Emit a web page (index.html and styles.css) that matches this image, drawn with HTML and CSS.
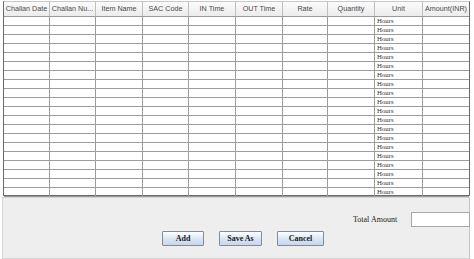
FILE: index.html
```html
<!DOCTYPE html>
<html>
<head>
<meta charset="utf-8">
<link rel="stylesheet" href="styles.css">
</head>
<body>
<div class="app">
  <div class="pane">
    <div class="grid head">
      <div class="hc">Challan Date</div>
      <div class="hc">Challan Nu...</div>
      <div class="hc">Item Name</div>
      <div class="hc">SAC Code</div>
      <div class="hc">IN Time</div>
      <div class="hc">OUT Time</div>
      <div class="hc">Rate</div>
      <div class="hc">Quantity</div>
      <div class="hc">Unit</div>
      <div class="hc">Amount(INR)</div>
    </div>
    <div class="rows">
      <div class="grid row"><div class="dc"></div><div class="dc"></div><div class="dc"></div><div class="dc"></div><div class="dc"></div><div class="dc"></div><div class="dc"></div><div class="dc"></div><div class="dc">Hours</div><div class="dc"></div></div>
      <div class="grid row"><div class="dc"></div><div class="dc"></div><div class="dc"></div><div class="dc"></div><div class="dc"></div><div class="dc"></div><div class="dc"></div><div class="dc"></div><div class="dc">Hours</div><div class="dc"></div></div>
      <div class="grid row"><div class="dc"></div><div class="dc"></div><div class="dc"></div><div class="dc"></div><div class="dc"></div><div class="dc"></div><div class="dc"></div><div class="dc"></div><div class="dc">Hours</div><div class="dc"></div></div>
      <div class="grid row"><div class="dc"></div><div class="dc"></div><div class="dc"></div><div class="dc"></div><div class="dc"></div><div class="dc"></div><div class="dc"></div><div class="dc"></div><div class="dc">Hours</div><div class="dc"></div></div>
      <div class="grid row"><div class="dc"></div><div class="dc"></div><div class="dc"></div><div class="dc"></div><div class="dc"></div><div class="dc"></div><div class="dc"></div><div class="dc"></div><div class="dc">Hours</div><div class="dc"></div></div>
      <div class="grid row"><div class="dc"></div><div class="dc"></div><div class="dc"></div><div class="dc"></div><div class="dc"></div><div class="dc"></div><div class="dc"></div><div class="dc"></div><div class="dc">Hours</div><div class="dc"></div></div>
      <div class="grid row"><div class="dc"></div><div class="dc"></div><div class="dc"></div><div class="dc"></div><div class="dc"></div><div class="dc"></div><div class="dc"></div><div class="dc"></div><div class="dc">Hours</div><div class="dc"></div></div>
      <div class="grid row"><div class="dc"></div><div class="dc"></div><div class="dc"></div><div class="dc"></div><div class="dc"></div><div class="dc"></div><div class="dc"></div><div class="dc"></div><div class="dc">Hours</div><div class="dc"></div></div>
      <div class="grid row"><div class="dc"></div><div class="dc"></div><div class="dc"></div><div class="dc"></div><div class="dc"></div><div class="dc"></div><div class="dc"></div><div class="dc"></div><div class="dc">Hours</div><div class="dc"></div></div>
      <div class="grid row"><div class="dc"></div><div class="dc"></div><div class="dc"></div><div class="dc"></div><div class="dc"></div><div class="dc"></div><div class="dc"></div><div class="dc"></div><div class="dc">Hours</div><div class="dc"></div></div>
      <div class="grid row"><div class="dc"></div><div class="dc"></div><div class="dc"></div><div class="dc"></div><div class="dc"></div><div class="dc"></div><div class="dc"></div><div class="dc"></div><div class="dc">Hours</div><div class="dc"></div></div>
      <div class="grid row"><div class="dc"></div><div class="dc"></div><div class="dc"></div><div class="dc"></div><div class="dc"></div><div class="dc"></div><div class="dc"></div><div class="dc"></div><div class="dc">Hours</div><div class="dc"></div></div>
      <div class="grid row"><div class="dc"></div><div class="dc"></div><div class="dc"></div><div class="dc"></div><div class="dc"></div><div class="dc"></div><div class="dc"></div><div class="dc"></div><div class="dc">Hours</div><div class="dc"></div></div>
      <div class="grid row"><div class="dc"></div><div class="dc"></div><div class="dc"></div><div class="dc"></div><div class="dc"></div><div class="dc"></div><div class="dc"></div><div class="dc"></div><div class="dc">Hours</div><div class="dc"></div></div>
      <div class="grid row"><div class="dc"></div><div class="dc"></div><div class="dc"></div><div class="dc"></div><div class="dc"></div><div class="dc"></div><div class="dc"></div><div class="dc"></div><div class="dc">Hours</div><div class="dc"></div></div>
      <div class="grid row"><div class="dc"></div><div class="dc"></div><div class="dc"></div><div class="dc"></div><div class="dc"></div><div class="dc"></div><div class="dc"></div><div class="dc"></div><div class="dc">Hours</div><div class="dc"></div></div>
      <div class="grid row"><div class="dc"></div><div class="dc"></div><div class="dc"></div><div class="dc"></div><div class="dc"></div><div class="dc"></div><div class="dc"></div><div class="dc"></div><div class="dc">Hours</div><div class="dc"></div></div>
      <div class="grid row"><div class="dc"></div><div class="dc"></div><div class="dc"></div><div class="dc"></div><div class="dc"></div><div class="dc"></div><div class="dc"></div><div class="dc"></div><div class="dc">Hours</div><div class="dc"></div></div>
      <div class="grid row"><div class="dc"></div><div class="dc"></div><div class="dc"></div><div class="dc"></div><div class="dc"></div><div class="dc"></div><div class="dc"></div><div class="dc"></div><div class="dc">Hours</div><div class="dc"></div></div>
      <div class="grid row"><div class="dc"></div><div class="dc"></div><div class="dc"></div><div class="dc"></div><div class="dc"></div><div class="dc"></div><div class="dc"></div><div class="dc"></div><div class="dc">Hours</div><div class="dc"></div></div>
    </div>
  </div>
  <div class="panel">
    <div class="total-row">
      <span class="label">Total Amount</span>
      <div class="field"></div>
    </div>
    <div class="buttons">
      <button class="btn add">Add</button>
      <button class="btn save">Save As</button>
      <button class="btn cancel">Cancel</button>
    </div>
  </div>
</div>
</body>
</html>
```
FILE: styles.css
```css
html, body { margin: 0; padding: 0; background: #ffffff; }
body { width: 474px; height: 259px; overflow: hidden; }
.app { display: flex; flex-direction: column; padding: 1px 0 0 2px; }
.pane {
  width: 465px;
  margin-left: 1px;
  border: 1px solid #6a6a6a;
  border-top-color: #c8c8c8;
  background: #fff;
  display: flex;
  flex-direction: column;
}
.grid { display: grid; grid-template-columns: 46fr 46fr 47fr 46fr 47fr 47fr 45fr 47fr 48fr 46fr; }
.head { height: 14px; background: linear-gradient(#fbfbfb, #ececec); border-bottom: 1px solid #9a9a9a; }
.hc {
  font-family: "Liberation Sans", Arial, sans-serif;
  font-size: 7.2px;
  color: #4a4a4a;
  text-align: center;
  line-height: 14px;
  white-space: nowrap;
  overflow: hidden;
  border-right: 1px solid #c0c0c0;
}
.hc:last-child { border-right: none; }
.rows { height: 178px; display: flex; flex-direction: column; }
.row { flex: 1; }
.dc {
  border-right: 1px solid #9c9c9c;
  border-bottom: 1px solid #9c9c9c;
  font-family: "Liberation Serif", "Times New Roman", serif;
  font-size: 6.8px;
  color: #333;
  padding-left: 2px;
  line-height: 8px;
  overflow: hidden;
}
.dc:last-child { border-right: none; }
.panel {
  margin-top: 1px;
  width: 466px;
  height: 60px;
  background: #eeeeee;
  border: 1px solid #d4d4d4;
  border-right-color: #c4c4c4;
  display: flex;
  flex-direction: column;
  align-items: flex-start;
}
.total-row { display: flex; align-items: center; margin-top: 14px; margin-left: 350px; }
.label {
  font-family: "Liberation Serif", "Times New Roman", serif;
  font-size: 8px;
  color: #222;
  width: 58px;
}
.field { width: 57px; height: 13px; background: #fff; border: 1px solid #a8a8a8; }
.buttons { display: flex; margin-top: 4px; margin-left: 159px; gap: 15px; }
.btn {
  margin: 0;
  padding: 0;
  height: 15px;
  font-family: "Liberation Serif", "Times New Roman", serif;
  font-weight: bold;
  font-size: 8px;
  color: #1a1a1a;
  background: linear-gradient(#ffffff, #dbe6f3 50%, #c6d7ec);
  border: 1px solid #7f8c9e;
  border-radius: 1px;
}
.add { width: 42px; }
.save { width: 43px; }
.cancel { width: 47px; }
```
